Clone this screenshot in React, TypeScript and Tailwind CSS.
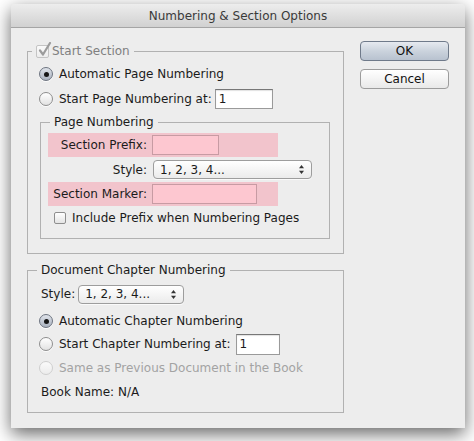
import React from "react";

// Mac-style "Numbering & Section Options" dialog

interface RadioProps {
  checked?: boolean;
  disabled?: boolean;
}

const Radio: React.FC<RadioProps> = ({ checked, disabled }) => {
  if (disabled) {
    return (
      <span className="w-[14px] h-[14px] shrink-0 rounded-full border border-[#cfcfcf] bg-linear-to-b from-[#fafafa] to-[#ececec]" />
    );
  }
  return (
    <span
      className={`w-[14px] h-[14px] shrink-0 rounded-full border flex items-center justify-center shadow-[0_1px_0_rgba(255,255,255,0.8)] ${
        checked
          ? "border-[#6d7480] bg-linear-to-b from-[#dfe3ea] to-[#aab2bf]"
          : "border-[#8e8e8e] bg-linear-to-b from-white to-[#e2e2e2]"
      }`}
    >
      {checked && <span className="w-[5px] h-[5px] rounded-full bg-[#151515]" />}
    </span>
  );
};

const Checkbox: React.FC = () => (
  <span className="w-[12px] h-[12px] shrink-0 rounded-[2px] border border-[#8e8e8e] bg-linear-to-b from-white to-[#e4e4e4]" />
);

const DisabledCheck: React.FC = () => (
  <span className="relative w-[13px] h-[13px] shrink-0 rounded-[2px] border border-[#c4c4c4] bg-linear-to-b from-[#fafafa] to-[#ededed]">
    <svg
      className="absolute left-[1px] top-[-4px]"
      width="14"
      height="15"
      viewBox="0 0 14 15"
    >
      <path
        d="M2 8.5 L5 12.5 L12 1"
        fill="none"
        stroke="#9c9c9c"
        strokeWidth="2.2"
        strokeLinecap="round"
        strokeLinejoin="round"
      />
    </svg>
  </span>
);

const TextField: React.FC<{ value?: string; className: string }> = ({ value, className }) => (
  <span
    className={`flex items-center pl-[3px] bg-white border border-[#9a9a9a] border-t-[#777] shadow-[inset_0_1px_1px_rgba(0,0,0,0.12)] ${className}`}
  >
    {value}
  </span>
);

const PinkField: React.FC<{ className: string }> = ({ className }) => (
  <span className={`bg-[#fdc7d0] border border-[#c79ba3] h-[20px] ${className}`} />
);

const Select: React.FC<{ className: string }> = ({ className }) => (
  <span
    className={`flex items-center justify-between pl-[6px] pr-[6px] rounded-[4px] border border-[#9d9d9d] bg-linear-to-b from-white to-[#ebebeb] shadow-[0_1px_0_rgba(255,255,255,0.7)] ${className}`}
  >
    <span>1, 2, 3, 4...</span>
    <svg width="7" height="11" viewBox="0 0 7 11">
      <path d="M3.5 1 L6 4.2 L1 4.2 Z" fill="#333" />
      <path d="M3.5 10 L6 6.8 L1 6.8 Z" fill="#333" />
    </svg>
  </span>
);

export default function App() {
  return (
    <div className="w-[474px] h-[441px] overflow-hidden bg-white pt-[4px] pl-[11px] font-['DejaVu_Sans',sans-serif] text-[12px] text-[#1b1b1b]">
      <div className="w-[454px] bg-[#ededed] rounded-t-[4px] shadow-[0_6px_18px_rgba(0,0,0,0.6)]">
        {/* Title bar */}
        <div className="h-[24px] flex items-center justify-center rounded-t-[4px] border-b border-[#a5a5a5] bg-linear-to-b from-[#ededed] to-[#d1d1d1] text-[#3a3a3a]">
          Numbering &amp; Section Options
        </div>

        <div className="flex items-start pl-[16px] pt-[13px] pb-[15px]">
          {/* Left column */}
          <div className="mt-[2px] w-[317px]">
            {/* Start Section */}
            <fieldset className="w-[317px] border border-[#b1b1b1]">
              <legend className="ml-[4px] px-[4px] leading-[16px]">
                <span className="flex items-center gap-[3px] text-[#808080]">
                  <DisabledCheck />
                  Start Section
                </span>
              </legend>
              <div className="pl-[11px] pt-[5px] pb-[14px]">
                <div className="flex items-center gap-[6px] h-[20px]">
                  <Radio checked />
                  <span>Automatic Page Numbering</span>
                </div>
                <div className="mt-[5px] flex items-center gap-[6px] h-[20px]">
                  <Radio />
                  <span>Start Page Numbering at:</span>
                  <TextField value="1" className="ml-[-3px] w-[58px] h-[20px]" />
                </div>

                {/* Page Numbering */}
                <fieldset className="ml-[1px] mt-[5px] w-[290px] border border-[#b1b1b1]">
                  <legend className="ml-[9px] px-[4px] leading-[16px]">Page Numbering</legend>
                  <div className="pl-[7px] pt-[3px] pb-[10px]">
                    <div className="flex items-center h-[24px] w-[230px] bg-[#f2c4cc]">
                      <span className="w-[99px] text-right">Section Prefix:</span>
                      <PinkField className="ml-[5px] w-[67px]" />
                    </div>
                    <div className="flex items-center h-[25px]">
                      <span className="w-[99px] text-right">Style:</span>
                      <Select className="ml-[6px] w-[159px] h-[19px]" />
                    </div>
                    <div className="flex items-center h-[24px] w-[230px] bg-[#f2c4cc]">
                      <span className="w-[99px] text-right">Section Marker:</span>
                      <PinkField className="ml-[5px] w-[105px]" />
                    </div>
                    <div className="mt-[2px] flex items-center gap-[6px] h-[20px] pl-[6px]">
                      <Checkbox />
                      <span>Include Prefix when Numbering Pages</span>
                    </div>
                  </div>
                </fieldset>
              </div>
            </fieldset>

            {/* Document Chapter Numbering */}
            <fieldset className="mt-[8px] w-[317px] border border-[#b1b1b1]">
              <legend className="ml-[9px] px-[4px] leading-[16px]">Document Chapter Numbering</legend>
              <div className="pt-[6px] pb-[10px]">
                <div className="flex items-center h-[20px] pl-[13px]">
                  <span>Style:</span>
                  <Select className="ml-[3px] w-[106px] h-[19px]" />
                </div>
                <div className="pl-[11px]">
                  <div className="mt-[7px] flex items-center gap-[6px] h-[20px]">
                    <Radio checked />
                    <span>Automatic Chapter Numbering</span>
                  </div>
                  <div className="mt-[3px] flex items-center gap-[6px] h-[20px]">
                    <Radio />
                    <span>Start Chapter Numbering at:</span>
                    <TextField value="1" className="ml-[-1px] w-[44px] h-[21px]" />
                  </div>
                  <div className="mt-[4px] flex items-center gap-[6px] h-[20px] text-[#a3a3a3]">
                    <Radio disabled />
                    <span>Same as Previous Document in the Book</span>
                  </div>
                </div>
                <div className="mt-[4px] flex items-center h-[20px] pl-[13px]">Book Name: N/A</div>
              </div>
            </fieldset>
          </div>

          {/* Buttons */}
          <div className="ml-[16px] flex flex-col gap-[8px]">
            <button className="w-[89px] h-[20px] rounded-[4px] border border-[#6f7a8a] bg-linear-to-b from-[#e6eaf0] via-[#cbd3dd] to-[#b8c2cf] text-[#111] leading-none">
              OK
            </button>
            <button className="w-[89px] h-[20px] rounded-[4px] border border-[#9c9c9c] bg-linear-to-b from-white to-[#e9e9e9] text-[#111] leading-none">
              Cancel
            </button>
          </div>
        </div>
      </div>
    </div>
  );
}
